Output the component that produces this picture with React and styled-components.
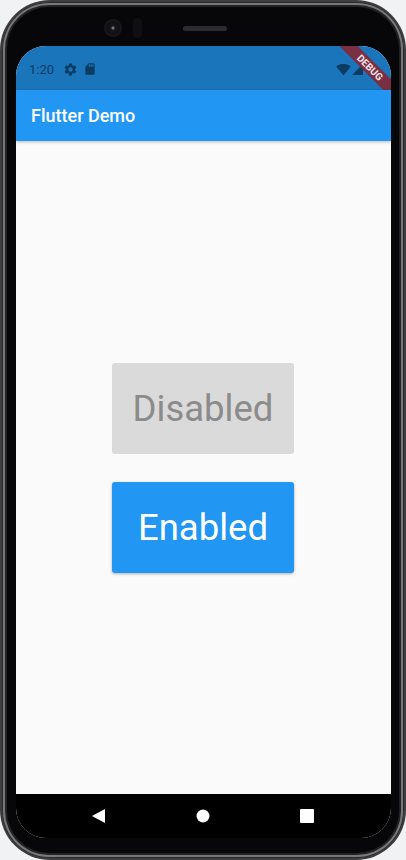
import React from "react";
import styled, { createGlobalStyle } from "styled-components";
import { MdSettings, MdSdCard, MdSignalWifi4Bar, MdSignalCellular4Bar, MdBatteryFull } from "react-icons/md";

const Global = createGlobalStyle`
  html, body { margin: 0; padding: 0; background: #f1f2f4; }
  body { width: 406px; height: 860px; overflow: hidden; font-family: Roboto, "Liberation Sans", sans-serif; }
`;

const Phone = styled.div`
  box-sizing: border-box;
  width: 406px;
  height: 860px;
  padding: 2px;
  border-radius: 50px;
  background: #3e3e40;
  display: flex;
`;

const Bezel = styled.div`
  box-sizing: border-box;
  flex: 1;
  display: flex;
  flex-direction: column;
  padding: 44px 13px 20px 14px;
  border-radius: 47px;
  background: #070709;
  box-shadow: inset 0 0 0 1px #2a2a2c, inset 0 0 0 3px #78787a, inset 0 0 0 5px #222224;
  position: relative;
`;

const Camera = styled.div`
  position: absolute;
  top: 17px;
  left: 102px;
  width: 18px;
  height: 18px;
  border-radius: 50%;
  background: radial-gradient(circle, #77777c 0 1px, #18181b 2px, #101012 6px, #1b1b1e 9px);
`;

const Sensor = styled.div`
  position: absolute;
  top: 16px;
  left: 131px;
  width: 9px;
  height: 20px;
  border-radius: 4px;
  background: #0f0f11;
`;

const Speaker = styled.div`
  position: absolute;
  top: 24px;
  left: 181px;
  width: 44px;
  height: 5px;
  border-radius: 3px;
  background: #2c2c2f;
`;

const Screen = styled.div`
  position: relative;
  flex: 1;
  display: flex;
  flex-direction: column;
  overflow: hidden;
  border-radius: 30px;
  background: #fafafa;
`;

const StatusBar = styled.div`
  box-sizing: border-box;
  height: 44px;
  flex: none;
  display: flex;
  align-items: center;
  padding: 2px 13px 0 13px;
  background: #1a75bb;
  color: #0c3c63;
`;

const Time = styled.span`
  font-size: 13px;
  margin-right: 9px;
`;

const StatusIcon = styled.span`
  display: flex;
  margin-right: ${(p) => p.$gap || 0}px;
  font-size: ${(p) => p.$size || 15}px;
`;

const Spacer = styled.div`
  flex: 1;
`;

const AppBar = styled.header`
  height: 51px;
  flex: none;
  display: flex;
  align-items: center;
  padding: 0 15px;
  background: #2196f3;
  color: #fff;
  font-size: 18px;
  font-weight: 500;
  box-shadow: 0 1px 3px rgba(0, 0, 0, 0.25);
  z-index: 1;
`;

const Body = styled.main`
  flex: 1;
  display: flex;
  flex-direction: column;
  align-items: center;
  justify-content: center;
  gap: 28px;
  padding-right: 1px;
`;

const ActionButton = styled.button`
  width: 182px;
  height: 91px;
  border: 0;
  padding: 0;
  border-radius: 3px;
  font-family: Roboto, "Liberation Sans", sans-serif;
  font-size: 36.5px;
  font-weight: 400;
  background: ${(p) => (p.disabled ? "#dadada" : "#2196f3")};
  color: ${(p) => (p.disabled ? "#8b8b8b" : "#fff")};
  box-shadow: ${(p) => (p.disabled ? "none" : "0 1px 3px rgba(0,0,0,.3)")};
`;

const NavBar = styled.nav`
  height: 44px;
  flex: none;
  display: flex;
  align-items: center;
  justify-content: center;
  gap: 90px;
  padding-right: 1px;
  background: #000;
`;

const Ribbon = styled.div`
  position: absolute;
  top: 15px;
  right: -15px;
  width: 72px;
  height: 13px;
  transform: rotate(45deg);
  background: #7a2f44;
  color: #f1e4e6;
  font-size: 10px;
  font-weight: 700;
  line-height: 13px;
  text-align: center;
`;

const NavGlyph = styled.svg`
  display: block;
  width: 14px;
  height: 14px;
  fill: #fff;
`;

export default function App() {
  return (
    <>
      <Global />
      <Phone>
        <Bezel>
          <Camera />
          <Sensor />
          <Speaker />
          <Screen>
            <StatusBar>
              <Time>1:20</Time>
              <StatusIcon $gap={5}><MdSettings /></StatusIcon>
              <StatusIcon $size={14}><MdSdCard /></StatusIcon>
              <Spacer />
              <StatusIcon $size={15}><MdSignalWifi4Bar /></StatusIcon>
              <StatusIcon $size={13}><MdSignalCellular4Bar /></StatusIcon>
              <StatusIcon $size={14}><MdBatteryFull /></StatusIcon>
            </StatusBar>
            <AppBar>Flutter Demo</AppBar>
            <Body>
              <ActionButton disabled>Disabled</ActionButton>
              <ActionButton>Enabled</ActionButton>
            </Body>
            <NavBar>
              <NavGlyph viewBox="0 0 14 14"><path d="M13 0v14L0 7z" /></NavGlyph>
              <NavGlyph viewBox="0 0 14 14"><circle cx="7" cy="7" r="6.5" /></NavGlyph>
              <NavGlyph viewBox="0 0 14 14"><rect width="14" height="14" rx="1" /></NavGlyph>
            </NavBar>
            <Ribbon>DEBUG</Ribbon>
          </Screen>
        </Bezel>
      </Phone>
    </>
  );
}
